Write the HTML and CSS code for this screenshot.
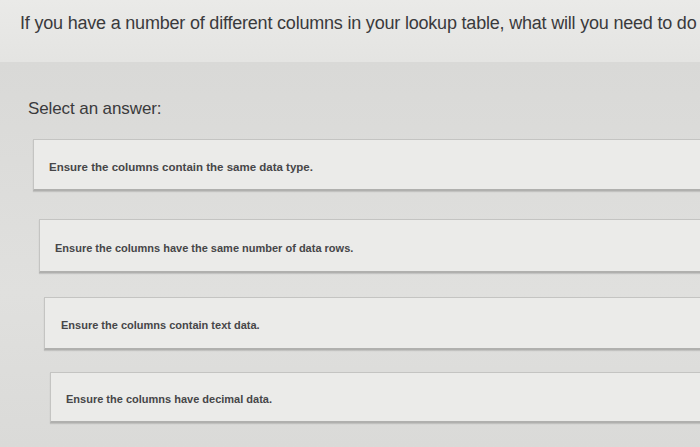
FILE: index.html
```html
<!DOCTYPE html>
<html>
<head>
<meta charset="utf-8">
<link rel="stylesheet" href="styles.css">
</head>
<body>
<div class="page">
  <header class="question-bar">
    <h1 class="question">If you have a number of different columns in your lookup table, what will you need to do</h1>
  </header>
  <main class="answers">
    <p class="prompt">Select an answer:</p>
    <ul class="options">
      <li class="option opt1"><span>Ensure the columns contain the same data type.</span></li>
      <li class="option opt2"><span>Ensure the columns have the same number of data rows.</span></li>
      <li class="option opt3"><span>Ensure the columns contain text data.</span></li>
      <li class="option opt4"><span>Ensure the columns have decimal data.</span></li>
    </ul>
  </main>
</div>
</body>
</html>
```
FILE: styles.css
```css
html, body {
  margin: 0;
  padding: 0;
  width: 700px;
  height: 447px;
  overflow: hidden;
  background: #dcdcda;
}
.page {
  width: 700px;
  height: 447px;
  overflow: hidden;
  font-family: "Liberation Sans", Arial, sans-serif;
}
.question-bar {
  height: 62px;
  background: linear-gradient(#eaeae8, #e4e4e2);
  padding-left: 20px;
  box-sizing: border-box;
}
.question {
  margin: 0;
  padding-top: 12px;
  font-size: 18px;
  font-weight: normal;
  color: #3a3a3c;
  white-space: nowrap;
  letter-spacing: -0.2px;
  line-height: 22px;
}
.answers {
  background: linear-gradient(#d9d9d7, #e0e0de 60%, #dadad8);
  height: 385px;
  padding-top: 36px;
  box-sizing: border-box;
}
.prompt {
  margin: 0 0 0 28px;
  font-size: 17px;
  line-height: 22px;
  color: #3a3a3c;
  letter-spacing: -0.1px;
}
.options {
  list-style: none;
  margin: 0;
  padding: 0;
}
.option {
  width: 700px;
  height: 52px;
  background: #ebebe9;
  border: 1px solid #c4c4c2;
  border-bottom: 2px solid #b0b0ae;
  box-shadow: 0 1px 1px rgba(0,0,0,0.12);
  display: flex;
  align-items: center;
  box-sizing: border-box;
  font-size: 11px;
  font-weight: bold;
  color: #464648;
  padding-top: 4px;
}
.opt1 { margin: 19px 0 0 33px; padding-left: 15px; font-size: 11.5px; }
.opt2 { margin: 28px 0 0 39px; padding-left: 15px; height: 54px; }
.opt3 { margin: 24px 0 0 44px; padding-left: 16px; height: 53px; }
.opt4 { margin: 22px 0 0 50px; padding-left: 15px; height: 51px; }
```
